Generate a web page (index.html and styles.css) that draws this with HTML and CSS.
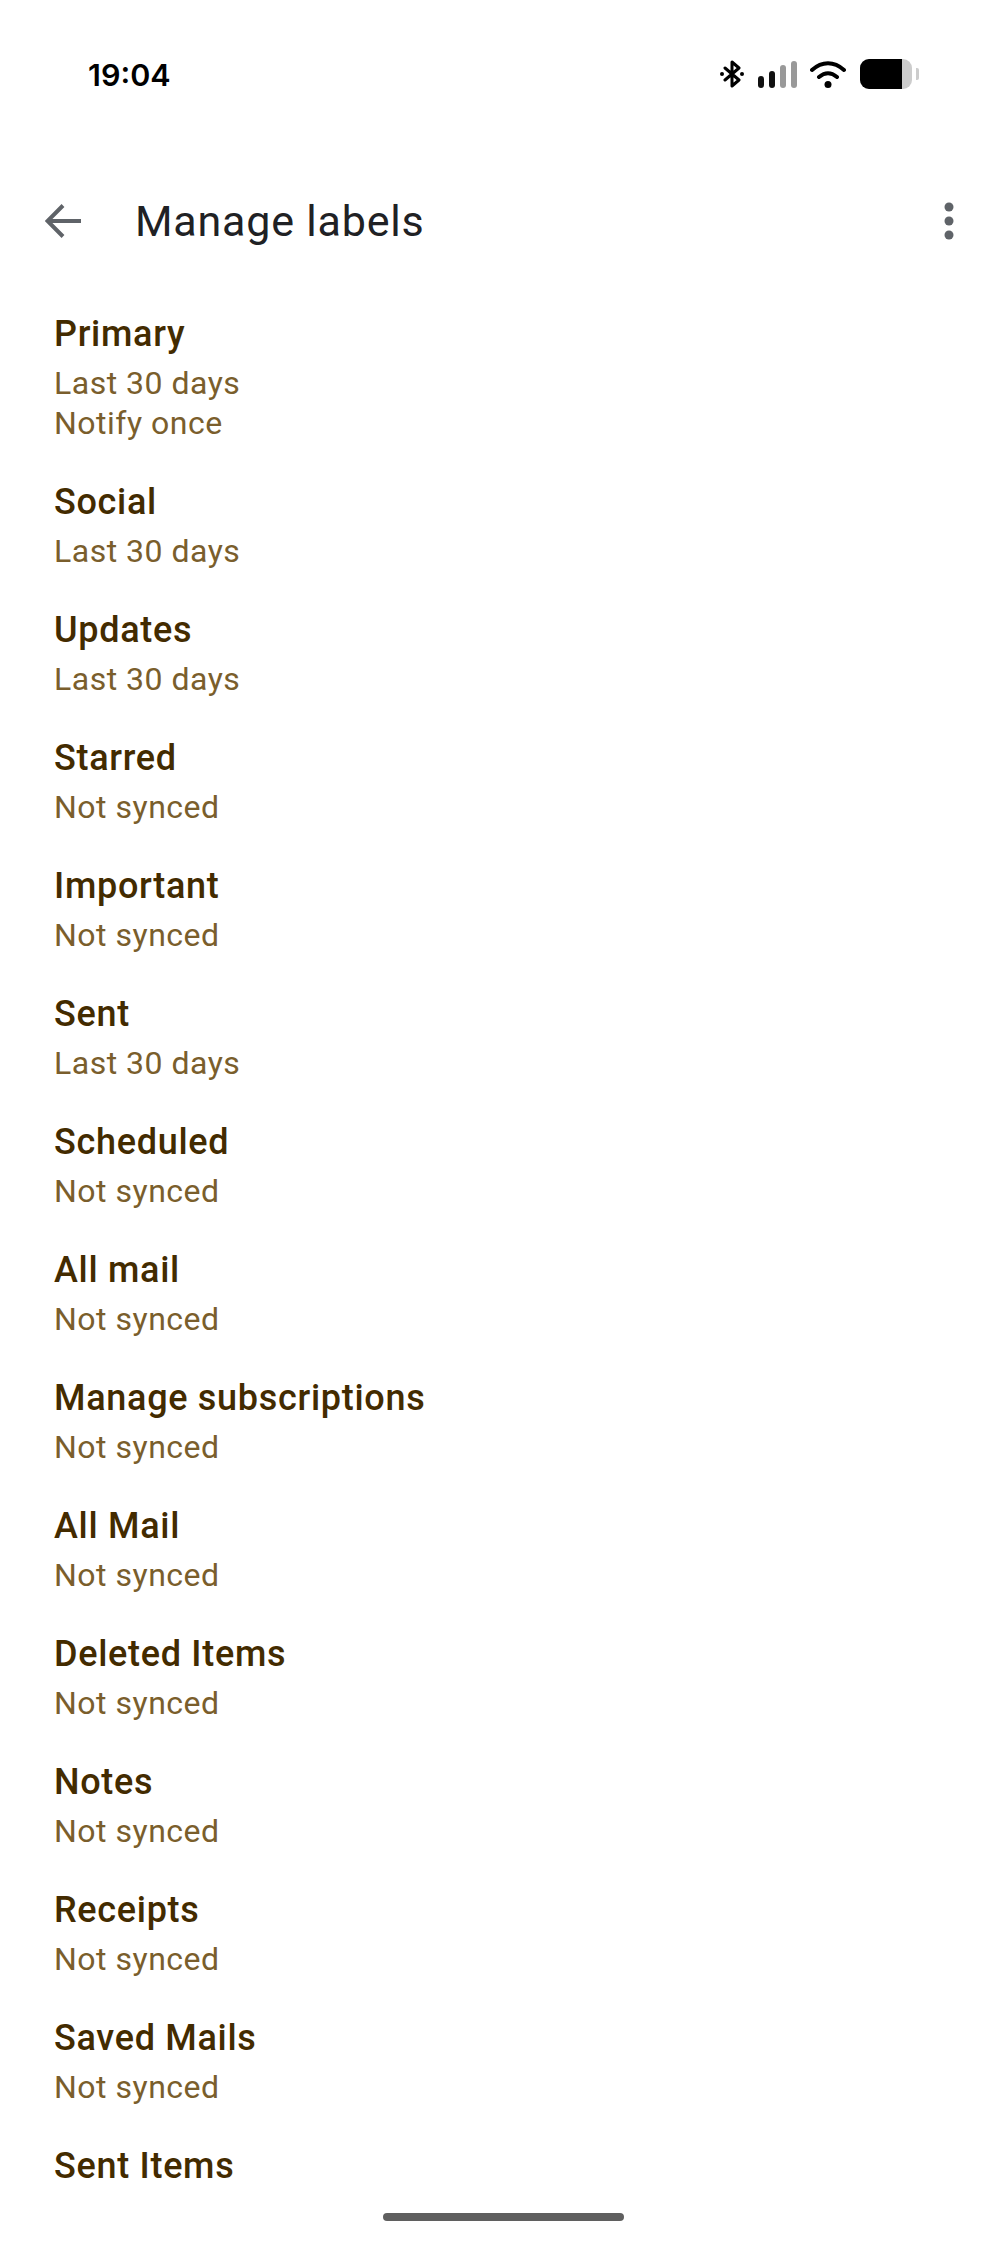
FILE: index.html
```html
<!DOCTYPE html>
<html lang="en">
<head>
<meta charset="utf-8">
<title>Manage labels</title>
<link rel="stylesheet" href="styles.css">
</head>
<body>
<div class="screen">
  <div class="status">
    <span class="time">19:04</span>
    <div class="status-icons">
      <svg class="ic-bt" viewBox="0 0 24 28" width="24" height="28"><path d="M5 8l14 12-7 6V2l7 6L5 20" fill="none" stroke="#000" stroke-width="3" stroke-linejoin="round" stroke-linecap="round"/><circle cx="2" cy="14" r="2" fill="#000"/><circle cx="22" cy="14" r="2" fill="#000"/></svg>
      <svg class="ic-signal" viewBox="0 0 39 28" width="39" height="28"><rect x="0" y="16" width="6" height="12" rx="3" fill="#111"/><rect x="11" y="11" width="6" height="17" rx="3" fill="#111"/><rect x="22" y="5" width="6" height="23" rx="3" fill="#999"/><rect x="33" y="1" width="6" height="27" rx="3" fill="#999"/></svg>
      <svg class="ic-wifi" viewBox="0 0 36 28" width="36" height="28"><path d="M2 10c10-9 22-9 32 0M9 17c6-5 12-5 18 0" fill="none" stroke="#000" stroke-width="4" stroke-linecap="round"/><circle cx="18" cy="24.500" r="3.500" fill="#000"/></svg>
      <div class="battery-wrap">
        <div class="battery"><div class="battery-fill"></div></div>
        <div class="nub"></div>
      </div>
    </div>
  </div>
  <div class="appbar">
    <svg class="back" viewBox="0 0 36 36" width="36" height="36"><path d="M36 18H3M18 2.500L2.500 18 18 33.500" fill="none" stroke="#5f6368" stroke-width="4"/></svg>
    <h1 class="title">Manage labels</h1>
    <svg class="more" viewBox="0 0 12 40" width="12" height="40"><circle cx="6" cy="6" r="4.500" fill="#5f6368"/><circle cx="6" cy="20" r="4.500" fill="#5f6368"/><circle cx="6" cy="34" r="4.500" fill="#5f6368"/></svg>
  </div>
  <ul class="list">
    <li class="row"><div class="name">Primary</div><div class="sub">Last 30 days</div><div class="sub">Notify once</div></li>
    <li class="row"><div class="name">Social</div><div class="sub">Last 30 days</div></li>
    <li class="row"><div class="name">Updates</div><div class="sub">Last 30 days</div></li>
    <li class="row"><div class="name">Starred</div><div class="sub">Not synced</div></li>
    <li class="row"><div class="name">Important</div><div class="sub">Not synced</div></li>
    <li class="row"><div class="name">Sent</div><div class="sub">Last 30 days</div></li>
    <li class="row"><div class="name">Scheduled</div><div class="sub">Not synced</div></li>
    <li class="row"><div class="name">All mail</div><div class="sub">Not synced</div></li>
    <li class="row"><div class="name">Manage subscriptions</div><div class="sub">Not synced</div></li>
    <li class="row"><div class="name">All Mail</div><div class="sub">Not synced</div></li>
    <li class="row"><div class="name">Deleted Items</div><div class="sub">Not synced</div></li>
    <li class="row"><div class="name">Notes</div><div class="sub">Not synced</div></li>
    <li class="row"><div class="name">Receipts</div><div class="sub">Not synced</div></li>
    <li class="row"><div class="name">Saved Mails</div><div class="sub">Not synced</div></li>
    <li class="row"><div class="name">Sent Items</div></li>
  </ul>
  <div class="home"></div>
</div>
</body>
</html>
```
FILE: styles.css
```css
* { box-sizing: border-box; }
html, body { margin: 0; padding: 0; background: #fff; }
body { font-family: Roboto, "Noto Sans", sans-serif; }
.screen { position: relative; width: 1008px; height: 2244px; overflow: hidden; background: #fff; }
.status { display: flex; align-items: center; justify-content: space-between; height: 40px; padding: 0 88px; position: absolute; top: 54px; left: 0; right: 0; }
.time { font-family: Inter, sans-serif; font-weight: 600; font-size: 30.500px; color: #000; }
.status-icons { display: flex; align-items: center; transform: translateX(-1px); }
.ic-bt { margin-right: 14px; }
.ic-signal { margin-right: 13px; }
.ic-wifi { margin-right: 14px; }
.battery-wrap { display: flex; align-items: center; gap: 4px; }
.battery { width: 52px; height: 30px; border-radius: 9px; background: #ccc; overflow: hidden; }
.battery-fill { width: 42px; height: 30px; background: #000; }
.nub { width: 3px; height: 12px; background: #ccc; border-radius: 0 2px 2px 0; }
.appbar { display: flex; align-items: center; padding: 181px 53px 0 45px; }
.back { flex: none; }
.title { margin: 0 0 0 54px; flex: 1; font-weight: 400; font-size: 43px; line-height: 80px; letter-spacing: 0.8px; color: #202124; }
.more { flex: none; }
.list { list-style: none; margin: 49px 0 0; padding: 0 0 0 54px; }
.row { padding: 0 0 35px; }
.name { font-size: 36px; font-weight: 500; letter-spacing: 0.7px; color: #432b00; line-height: 48px; margin-bottom: 5px; }
.sub { font-size: 32px; letter-spacing: 0.5px; color: #7a5e2c; line-height: 40px; }
.home { position: absolute; left: 383px; top: 2213px; width: 241px; height: 8px; border-radius: 4px; background: #5f5f5f; }
```
